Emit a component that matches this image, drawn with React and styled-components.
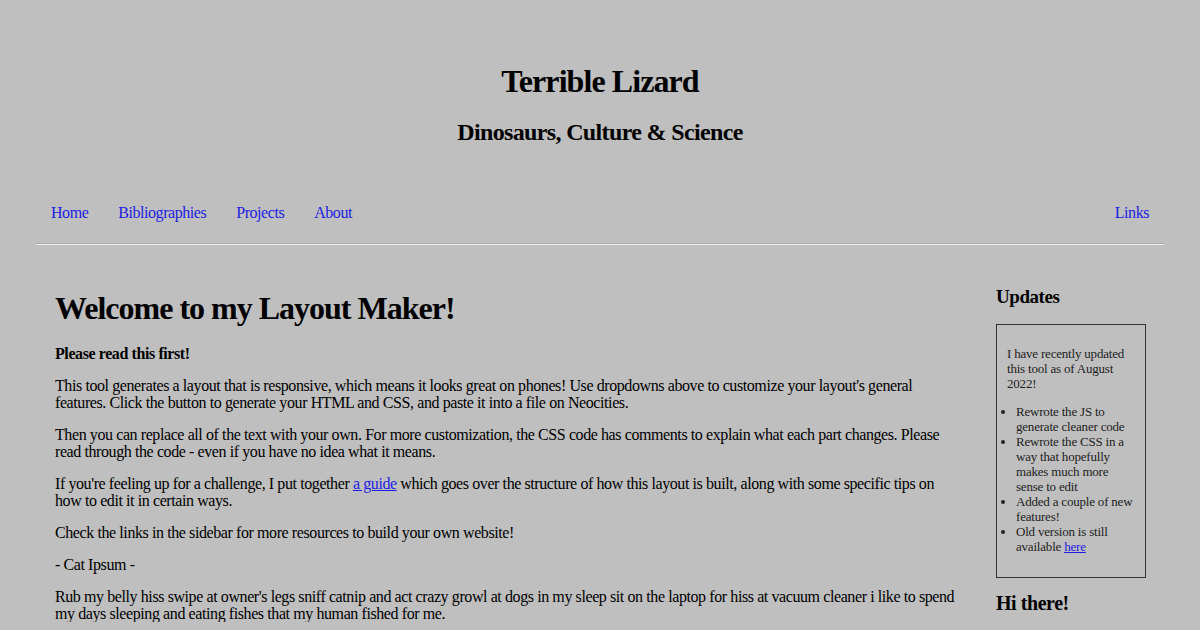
import React from 'react';
import styled, { createGlobalStyle } from 'styled-components';

const GlobalStyle = createGlobalStyle`
    html, body {
        margin: 0;
        padding: 0;
        background: #bfbfbf;
    }
    body {
        font-family: "Liberation Serif", "Times New Roman", serif;
        font-size: 16px;
        letter-spacing: -0.41px;
        color: #000;
    }
`;

const Page = styled.div`
    margin: 0 36px;
`;

const Header = styled.header`
    padding-top: 63px;
    text-align: center;
`;

const SiteTitle = styled.h1`
    margin: 0;
    font-size: 32px;
    line-height: 37px;
    letter-spacing: -0.93px;
`;

const SiteSubtitle = styled.h2`
    margin: 18px 0 0;
    font-size: 24px;
    line-height: 28px;
    letter-spacing: -0.65px;
`;

const Nav = styled.nav`
    display: flex;
    justify-content: space-between;
    margin-top: 58px;
    line-height: 18px;
    letter-spacing: -0.45px;
`;

const NavGroup = styled.div`
    display: flex;
`;

const NavLink = styled.a`
    padding: 0 15px;
    color: #1c1ce2;
    text-decoration: none;
`;

const Rule = styled.hr`
    margin: 21px 0 0;
    border: none;
    border-top: 1px solid #a9a9a9;
    border-bottom: 1px solid #ececec;
`;

const Body = styled.div`
    display: flex;
    align-items: flex-start;
`;

const Main = styled.main`
    flex: 1;
    padding: 0 34px 0 19px;
`;

const Title = styled.h1`
    margin: 45px 0 0;
    font-size: 32px;
    line-height: 37px;
    letter-spacing: -1px;
`;

const Para = styled.p`
    margin: ${({ first }) => (first ? '18px' : '15px')} 0 0;
    line-height: 17px;
    font-weight: ${({ bold }) => (bold ? 'bold' : 'normal')};
`;

const TextLink = styled.a`
    color: #1c1ce2;
`;

const Aside = styled.aside`
    width: 150px;
    margin-right: 18px;
    letter-spacing: -0.45px;
`;

const SideHeading = styled.h2`
    margin: ${({ top }) => top} 0 0;
    font-size: ${({ size }) => size};
    line-height: 22px;
`;

const Box = styled.div`
    margin-top: 16px;
    border: 1px solid #333;
    padding: 8px 10px 10px;
    font-size: 13px;
    line-height: 15px;
    letter-spacing: -0.2px;
    color: #222;
`;

const BoxPara = styled.p`
    margin: 13px 0;
`;

const BoxList = styled.ul`
    margin: 13px 0;
    padding-left: 9px;
`;

export default function App() {
    return (
        <>
            <GlobalStyle />
            <Page>
                <Header>
                    <SiteTitle>Terrible Lizard</SiteTitle>
                    <SiteSubtitle>Dinosaurs, Culture &amp; Science</SiteSubtitle>
                </Header>
                <Nav>
                    <NavGroup>
                        <NavLink href="#">Home</NavLink>
                        <NavLink href="#">Bibliographies</NavLink>
                        <NavLink href="#">Projects</NavLink>
                        <NavLink href="#">About</NavLink>
                    </NavGroup>
                    <NavGroup>
                        <NavLink href="#">Links</NavLink>
                    </NavGroup>
                </Nav>
                <Rule />
                <Body>
                    <Main>
                        <Title>Welcome to my Layout Maker!</Title>
                        <Para first bold>Please read this first!</Para>
                        <Para>
                            This tool generates a layout that is responsive, which means it looks great on phones! Use dropdowns above to customize your layout's general features. Click the button to generate your HTML and CSS, and paste it into a file on Neocities.
                        </Para>
                        <Para>
                            Then you can replace all of the text with your own. For more customization, the CSS code has comments to explain what each part changes. Please read through the code - even if you have no idea what it means.
                        </Para>
                        <Para>
                            If you're feeling up for a challenge, I put together <TextLink href="#">a guide</TextLink> which goes over the structure of how this layout is built, along with some specific tips on how to edit it in certain ways.
                        </Para>
                        <Para>Check the links in the sidebar for more resources to build your own website!</Para>
                        <Para>- Cat Ipsum -</Para>
                        <Para>
                            Rub my belly hiss swipe at owner's legs sniff catnip and act crazy growl at dogs in my sleep sit on the laptop for hiss at vacuum cleaner i like to spend my days sleeping and eating fishes that my human fished for me.
                        </Para>
                    </Main>
                    <Aside>
                        <SideHeading top="41px" size="19px">Updates</SideHeading>
                        <Box>
                            <BoxPara>I have recently updated this tool as of August 2022!</BoxPara>
                            <BoxList>
                                <li>Rewrote the JS to generate cleaner code</li>
                                <li>Rewrote the CSS in a way that hopefully makes much more sense to edit</li>
                                <li>Added a couple of new features!</li>
                                <li>Old version is still available <TextLink href="#">here</TextLink></li>
                            </BoxList>
                        </Box>
                        <SideHeading top="14px" size="20px">Hi there!</SideHeading>
                    </Aside>
                </Body>
            </Page>
        </>
    );
}
